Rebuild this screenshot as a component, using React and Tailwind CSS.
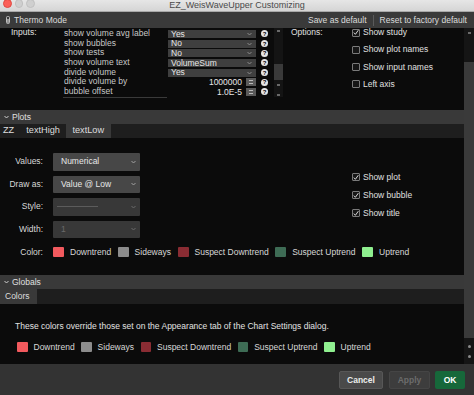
import React from "react";

const Chevron = ({ color = "#9a9a9a" }) => (
  <svg width="5" height="4" viewBox="0 0 5 4">
    <path d="M0.5 1 L2.5 3 L4.5 1" stroke={color} strokeWidth="1" fill="none" />
  </svg>
);

const Check = ({ checked }) => (
  <span className="w-[8px] h-[8px] border border-[#7a7a7a] bg-[#161616] rounded-[1px] flex items-center justify-center shrink-0">
    {checked && (
      <svg width="7" height="7" viewBox="0 0 7 7">
        <path d="M1 3.6 L2.8 5.6 L6.2 0.8" stroke="#e6e6e6" strokeWidth="1.1" fill="none" />
      </svg>
    )}
  </span>
);

const Help = () => (
  <span className="w-[7px] h-[7px] rounded-full bg-[#e6e6e6] text-black text-[6px] font-bold leading-none flex items-center justify-center">
    ?
  </span>
);

const Spinner = () => (
  <span className="w-[10px] h-[8px] bg-[#5a5a5a] flex flex-col items-center justify-center gap-[2px]">
    <span className="w-[4px] h-px bg-[#bbb]" />
    <span className="w-[4px] h-px bg-[#bbb]" />
  </span>
);

const swatches = [
  ["#f25a5e", "Downtrend"],
  ["#8c8c8c", "Sideways"],
  ["#8a2c33", "Suspect Downtrend"],
  ["#3e6c55", "Suspect Uptrend"],
  ["#8fef8f", "Uptrend"],
];

const SwatchRow = ({ w = "w-[11px]" }) => (
  <div className="flex items-center gap-[6.5px]">
    {swatches.map(([c, l]) => (
      <div key={l} className="flex items-center gap-[6px]">
        <span className={`${w} h-[10px] rounded-[1px]`} style={{ backgroundColor: c }} />
        <span className="text-[#d8d8d8] leading-[10px]">{l}</span>
      </div>
    ))}
  </div>
);

const inputs = [
  ["show volume avg label", "dd", "Yes"],
  ["show bubbles", "dd", "No"],
  ["show tests", "dd", "No"],
  ["show volume text", "dd", "VolumeSum"],
  ["divide volume", "dd", "Yes"],
  ["divide volume by", "num", "1000000"],
  ["bubble offset", "num", "1.0E-5"],
];

const SectionHeader = ({ title }) => (
  <div className="h-[14px] shrink-0 bg-[#393939] flex items-center pl-[4px] gap-[3px] text-[#e0e0e0]">
    <Chevron color="#d0d0d0" />
    <span className="leading-none">{title}</span>
  </div>
);

const Dropdown = ({ children, disabled }) => (
  <div
    className={`ml-[10px] w-[87px] h-full flex items-center justify-between pl-[8px] pr-[4px] rounded-[1px] ${
      disabled ? "bg-[#383838] text-[#6a6a6a]" : "bg-[#474747] text-[#e8e8e8]"
    }`}
  >
    <span className="flex items-center">{children}</span>
    <Chevron color={disabled ? "#6a6a6a" : "#a0a0a0"} />
  </div>
);

export default function App() {
  return (
    <div className="w-[474px] h-[395px] overflow-hidden flex flex-col bg-[#0b0b0b] text-[8.5px] font-['Liberation_Sans',Arial,sans-serif]">
      {/* title bar */}
      <div className="h-[12px] shrink-0 grid grid-cols-[1fr_auto_1fr] bg-gradient-to-b from-[#e6e6e6] to-[#d5d5d5] border-b border-[#a9a9a9]">
        <div className="flex items-start pl-[3px] gap-[3px] -mt-[1px]">
          <span className="w-[8.5px] h-[8.5px] rounded-full bg-[#fb5f58] border border-[#de4a43]" />
          <span className="w-[8.5px] h-[8.5px] rounded-full bg-[#cfcfcf] border border-[#c0c0c0]" />
          <span className="w-[8.5px] h-[8.5px] rounded-full bg-[#cfcfcf] border border-[#c0c0c0]" />
        </div>
        <div className="text-[9px] leading-[11px] text-[#4a4a4a]">EZ_WeisWaveUpper Customizing</div>
        <div />
      </div>

      {/* toolbar */}
      <div className="h-[16px] shrink-0 bg-[#3a3a3a] flex items-center text-[#dcdcdc]">
        <div className="flex items-center pl-[6px] gap-[4px]">
          <svg width="4" height="8" viewBox="0 0 4 8">
            <rect x="0.5" y="0.5" width="3" height="7" rx="1" fill="none" stroke="#bdbdbd" />
            <rect x="1.3" y="3" width="1.4" height="4" fill="#bdbdbd" />
          </svg>
          <span>Thermo Mode</span>
        </div>
        <div className="ml-auto flex items-center pr-[7px]">
          <span>Save as default</span>
          <span className="w-px h-[11px] bg-[#5a5a5a] mx-[6px]" />
          <span>Reset to factory default</span>
        </div>
      </div>

      {/* body */}
      <div className="flex h-[336px] shrink-0">
        <div className="w-[464px] flex flex-col">
          {/* inputs */}
          <div className="h-[74px] shrink-0 flex">
            <div className="w-[63px] pl-[11px] text-[#e0e0e0] leading-[9px]">Inputs:</div>
            <div className="w-[104px] self-start border-b border-[#3a3a3a] pt-[1px]">
              {inputs.map(([n]) => (
                <div key={n} className="h-[9.7px] leading-[9.7px] pl-[1px] text-[#c8c8c8]">
                  {n}
                </div>
              ))}
            </div>
            <div className="w-[91px] self-start pt-[1px] pl-[1px]">
              {inputs.map(([n, t, v]) => (
                <div key={n} className="h-[9.7px] flex items-center">
                  {t === "dd" ? (
                    <div className="w-[88px] h-[8px] bg-[#3f3f3f] flex items-center justify-between pl-[3px] pr-[4px] text-[#e6e6e6] leading-none">
                      <span>{v}</span>
                      <Chevron color="#8a8a8a" />
                    </div>
                  ) : (
                    <div className="w-[88px] h-[8px] flex items-center justify-end gap-[4px] text-[#e6e6e6] leading-none">
                      <span>{v}</span>
                      <Spinner />
                    </div>
                  )}
                </div>
              ))}
            </div>
            <div className="w-[16px] self-start pt-[1px] pl-[3px]">
              {inputs.map(([n]) => (
                <div key={n} className="h-[9.7px] flex items-center">
                  <Help />
                </div>
              ))}
            </div>
            <div className="w-[9px] h-[69px] bg-[#141414] flex flex-col items-center">
              <span className="mt-[2px] w-[3px] h-[2px] bg-[#6a6a6a]" />
              <span className="mt-[32px] w-full h-[16px] bg-[#3a3a3a]" />
              <span className="mt-[4px] w-[3px] h-[2px] bg-[#6a6a6a]" />
              <span className="mt-[8px] w-[3px] h-[2px] bg-[#6a6a6a]" />
            </div>
            <div className="pl-[8px] w-[69px] text-[#e0e0e0] leading-[9px]">Options:</div>
            <div className="flex flex-col gap-[8.2px]">
              {[
                ["Show study", true],
                ["Show plot names", false],
                ["Show input names", false],
                ["Left axis", false],
              ].map(([l, c]) => (
                <div key={l} className="h-[9px] flex items-center gap-[3px] text-[#e0e0e0]">
                  <Check checked={c} />
                  <span className="leading-none">{l}</span>
                </div>
              ))}
            </div>
          </div>
          <div className="h-[8px] shrink-0" />

          {/* plots */}
          <SectionHeader title="Plots" />
          <div className="h-[14px] shrink-0 bg-[#1e1e1e] flex items-stretch text-[#dedede] text-[9.2px]">
            <div className="pl-[3px] pr-[6px] flex items-center">ZZ</div>
            <div className="px-[6px] flex items-center">textHigh</div>
            <div className="px-[6.5px] flex items-center bg-[#393939]">textLow</div>
          </div>
          <div className="h-[137px] shrink-0 flex flex-col">
            <div className="flex">
              <div className="w-[140px] flex flex-col pt-[15px] gap-[5px] text-[#d8d8d8]">
                <div className="h-[17.5px] flex items-center">
                  <span className="w-[43px] text-right">Values:</span>
                  <Dropdown>Numerical</Dropdown>
                </div>
                <div className="h-[17.5px] flex items-center">
                  <span className="w-[43px] text-right">Draw as:</span>
                  <Dropdown>Value @ Low</Dropdown>
                </div>
                <div className="h-[17.5px] flex items-center">
                  <span className="w-[43px] text-right">Style:</span>
                  <Dropdown disabled>
                    <span className="ml-[-4px] w-[41px] h-px bg-[#5c5c5c]" />
                  </Dropdown>
                </div>
                <div className="h-[17.5px] flex items-center">
                  <span className="w-[43px] text-right">Width:</span>
                  <Dropdown disabled>1</Dropdown>
                </div>
              </div>
              <div className="ml-[212px] pt-[30px] flex flex-col text-[#e0e0e0]">
                {["Show plot", "Show bubble", "Show title"].map((l) => (
                  <div key={l} className="h-[18px] flex items-center gap-[3px]">
                    <Check checked />
                    <span className="leading-none">{l}</span>
                  </div>
                ))}
              </div>
            </div>
            <div className="mt-[9px] flex items-center">
              <span className="w-[43px] text-right text-[#d8d8d8] leading-[10px]">Color:</span>
              <div className="ml-[10px]">
                <SwatchRow />
              </div>
            </div>
          </div>

          {/* globals */}
          <SectionHeader title="Globals" />
          <div className="h-[15px] shrink-0 bg-[#1e1e1e] flex items-stretch text-[#dedede]">
            <div className="pl-[5px] pr-[7px] flex items-center bg-[#393939]">Colors</div>
          </div>
          <div className="flex-1 flex flex-col pt-[17px]">
            <div className="pl-[15px] leading-[10px] text-[#e2e2e2]">
              These colors override those set on the Appearance tab of the Chart Settings dialog.
            </div>
            <div className="mt-[11px] pl-[17px]">
              <SwatchRow w="w-[10.5px]" />
            </div>
          </div>
        </div>

        {/* main scrollbar */}
        <div className="w-[10px] bg-[#151515] flex flex-col">
          <div className="h-[34px] flex justify-center pt-[4px]">
            <span className="w-[3px] h-[2px] bg-[#6a6a6a]" />
          </div>
          <div className="h-[276px] bg-[#3a3a3a]" />
          <div className="flex-1 flex flex-col items-center justify-center gap-[7px]">
            <span className="w-[3px] h-[3px] rounded-full bg-[#8a8a8a]" />
            <span className="w-[3px] h-[3px] rounded-full bg-[#8a8a8a]" />
          </div>
        </div>
      </div>

      {/* footer */}
      <div className="flex-1 bg-[#333333] flex items-start justify-end pt-[7px] pr-[9px] font-bold">
        <div className="w-[44px] h-[18px] bg-[#4a4a4a] border border-[#575757] rounded-[2px] flex items-center justify-center text-[#ececec]">
          Cancel
        </div>
        <div className="ml-[6px] w-[41px] h-[18px] bg-[#3d3d3d] border border-[#454545] rounded-[2px] flex items-center justify-center text-[#6c6c6c]">
          Apply
        </div>
        <div className="ml-[5px] w-[30px] h-[18px] bg-[#16683a] rounded-[2px] flex items-center justify-center text-white">
          OK
        </div>
      </div>
    </div>
  );
}
